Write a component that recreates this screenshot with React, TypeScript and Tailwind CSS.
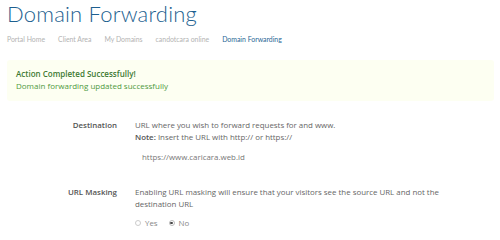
export default function App() {
  const crumbs = ['Portal Home', 'Client Area', 'My Domains', 'candotcara online'];

  return (
    <div className="w-[500px] h-[239px] bg-white overflow-hidden font-['Open_Sans',sans-serif] text-[#666]">
      <div className="px-[7px]">
        <h1 className="font-['Lato',sans-serif] font-light text-[22px] leading-[28px] text-[#1d5f8f] tracking-[0.2px]">
          Domain Forwarding
        </h1>
        <nav className="flex items-center gap-[13px] mt-[6px] text-[6.9px] leading-[10px] text-[#b3b3b3] font-['Lato',sans-serif]">
          {crumbs.map((c) => (
            <span key={c}>{c}</span>
          ))}
          <span className="text-[#2a6796]">Domain Forwarding</span>
        </nav>
      </div>

      <div className="mx-[7px] mt-[16px] rounded-[3px] bg-[#fdfff2] px-[9px] py-[8px] h-[41px] w-[487px] text-[8px] leading-[12px] text-[#4f9a3e]">
        <p className="font-semibold text-[#3d7a33]">Action Completed Successfully!</p>
        <p>Domain forwarding updated successfully</p>
      </div>

      <div className="mt-[18px] grid grid-cols-[117px_335px] gap-x-[18px] text-[7.9px] leading-[12px]">
        <div className="text-right font-semibold text-[#555]">Destination</div>
        <div>
          <p>URL where you wish to forward requests for and www.</p>
          <p>
            <span className="font-semibold text-[#555]">Note:</span> Insert the URL with http:// or https://
          </p>
          <div className="mt-[4px] h-[20px] w-[180px] flex items-center pl-[7px] text-[#777]">
            https://www.caricara.web.id
          </div>
        </div>

        <div className="mt-[19px] text-right font-semibold text-[#555]">URL Masking</div>
        <div className="mt-[19px]">
          <p>Enabling URL masking will ensure that your visitors see the source URL and not the destination URL</p>
          <div className="mt-[7px] flex items-center text-[#888]">
            <label className="flex items-center gap-[4px]">
              <span className="w-[6px] h-[6px] rounded-full border border-[#ccc] bg-white" />
              Yes
            </label>
            <label className="flex items-center gap-[4px] ml-[11px]">
              <span className="w-[6px] h-[6px] rounded-full border border-[#bbb] bg-white flex items-center justify-center">
                <span className="w-[2.5px] h-[2.5px] rounded-full bg-[#444]" />
              </span>
              No
            </label>
          </div>
        </div>
      </div>
    </div>
  );
}
